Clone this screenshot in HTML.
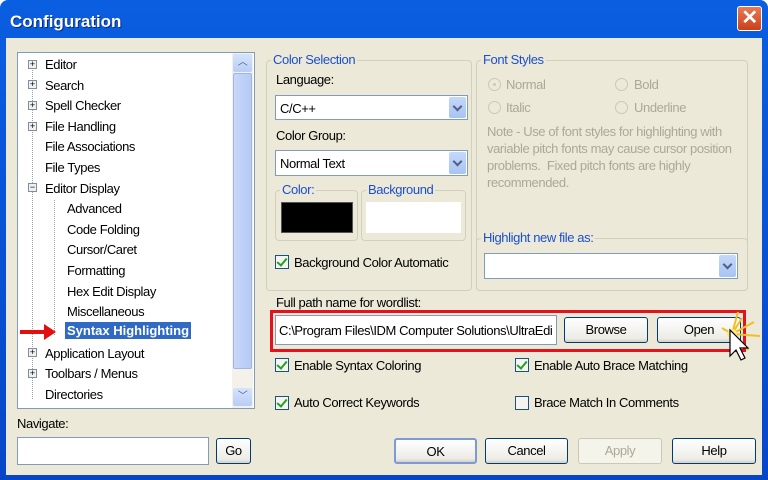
<!DOCTYPE html>
<html><head><meta charset="utf-8"><style>
*{box-sizing:border-box;margin:0;padding:0}
body{width:768px;height:480px;overflow:hidden;background:#fff;font-family:"Liberation Sans",sans-serif;font-size:13px;letter-spacing:-0.4px;color:#000;position:relative}
.a{position:absolute;white-space:nowrap}
.win{position:absolute;left:0;top:0;width:768px;height:480px;background:linear-gradient(#0a5ee0,#0846c8);border-radius:8px 8px 0 0}
.body{position:absolute;left:6px;top:38px;width:756px;height:437px;background:#ece9d8}
.title{left:10px;top:12px;color:#fff;font-weight:bold;font-size:17px;letter-spacing:0;text-shadow:1px 1px #0a2a80}
.close{left:737px;top:6px;width:25px;height:25px;background:linear-gradient(#e97a56,#c8401a);border:1px solid #fff;border-radius:3px;color:#fff;font-size:20px;text-align:center;line-height:22px;font-weight:bold}
.box{position:absolute;background:#fff;border:1px solid #7f9db9}
.grp{position:absolute;border:1px solid #d0d0bf;border-radius:4px}
.gl{position:absolute;background:#ece9d8;color:#1a4fd0;padding:0 2px;top:-9px;left:4px}
.combo{position:absolute;background:#fff;border:1px solid #7f9db9}
.dd{position:absolute;right:1px;top:1px;bottom:1px;width:17px;background:linear-gradient(#c5d8fb,#a9c3f2);border-radius:2px}
.dd:after{content:"";position:absolute;left:5px;top:6px;width:5px;height:5px;border-right:2px solid #4d6185;border-bottom:2px solid #4d6185;transform:rotate(45deg)}
.btn{position:absolute;border:1px solid #003c74;border-radius:3px;background:linear-gradient(#fff,#ecebe6 85%,#d6d0c5);text-align:center}
.cb{position:absolute;width:14px;height:14px;border:1px solid #1c5180;background:#f4f4f0}
.cb.on:after{content:"";position:absolute;left:3px;top:0px;width:4px;height:8px;border-right:2px solid #21a121;border-bottom:2px solid #21a121;transform:rotate(40deg)}
.rad{position:absolute;width:13px;height:13px;border:1px solid #cac8bb;border-radius:50%}
.g{color:#aca899}
.pm{position:absolute;width:9px;height:9px;border:1px solid #7a8ea5;background:#f0f0ec;font-size:9px;line-height:7px;text-align:center;letter-spacing:0}
</style></head><body>
<div class="win"></div>
<div class="a title">Configuration</div>
<div class="a close">✕</div>
<div class="body"></div>

<div class="box" style="left:17px;top:52px;width:238px;height:357px"></div>
<div class="a" style="left:232px;top:53px;width:21px;height:355px;background:#f3f1ea"></div>
<div class="a" style="left:233px;top:54px;width:19px;height:18px;background:linear-gradient(#d6e3fc,#b8cdf6);border-radius:2px;color:#4d6185;font-size:10px;text-align:center;line-height:18px">︿</div>
<div class="a" style="left:233px;top:73px;width:19px;height:296px;background:linear-gradient(90deg,#c8d7fa,#b6caf3);border:1px solid #9eb5e6;border-radius:2px"></div>
<div class="a" style="left:233px;top:388px;width:19px;height:18px;background:linear-gradient(#d6e3fc,#b8cdf6);border-radius:2px;color:#4d6185;font-size:10px;text-align:center;line-height:18px">﹀</div>
<div class="a" style="left:32px;top:64px;height:335px;border-left:1px dotted #a0a0a0"></div>
<div class="a" style="left:54px;top:200px;height:135px;border-left:1px dotted #a0a0a0"></div>
<div class="pm" style="left:28px;top:60px">+</div>
<div class="pm" style="left:28px;top:80px">+</div>
<div class="pm" style="left:28px;top:101px">+</div>
<div class="pm" style="left:28px;top:122px">+</div>
<div class="pm" style="left:28px;top:183px">−</div>
<div class="pm" style="left:28px;top:348px">+</div>
<div class="pm" style="left:28px;top:369px">+</div>
<div class="a" style="left:45px;top:57px">Editor</div>
<div class="a" style="left:45px;top:78px">Search</div>
<div class="a" style="left:45px;top:98px">Spell Checker</div>
<div class="a" style="left:45px;top:119px">File Handling</div>
<div class="a" style="left:45px;top:139px">File Associations</div>
<div class="a" style="left:45px;top:160px">File Types</div>
<div class="a" style="left:45px;top:181px">Editor Display</div>
<div class="a" style="left:67px;top:201px">Advanced</div>
<div class="a" style="left:67px;top:222px">Code Folding</div>
<div class="a" style="left:67px;top:242px">Cursor/Caret</div>
<div class="a" style="left:67px;top:263px">Formatting</div>
<div class="a" style="left:67px;top:284px">Hex Edit Display</div>
<div class="a" style="left:67px;top:304px">Miscellaneous</div>
<div class="a" style="left:65px;top:322px;background:#316ac5;color:#fff;font-weight:bold;padding:1px 2px;letter-spacing:0">Syntax Highlighting</div>
<div class="a" style="left:45px;top:346px">Application Layout</div>
<div class="a" style="left:45px;top:366px">Toolbars / Menus</div>
<div class="a" style="left:45px;top:387px">Directories</div>
<svg class="a" style="left:18px;top:322px" width="42" height="20"><path d="M2 8h24v-6l12 8-12 8v-6H2z" fill="#e01010"/></svg>

<div class="a" style="left:17px;top:416px">Navigate:</div>
<div class="box" style="left:17px;top:437px;width:192px;height:28px"></div>
<div class="btn" style="left:216px;top:438px;width:35px;height:26px;line-height:24px">Go</div>

<div class="grp" style="left:266px;top:60px;width:206px;height:231px"><span class="gl">Color Selection</span></div>
<div class="a" style="left:276px;top:72px">Language:</div>
<div class="combo" style="left:275px;top:95px;width:193px;height:25px"><span class="a" style="left:4px;top:5px">C/C++</span><div class="dd"></div></div>
<div class="a" style="left:276px;top:128px">Color Group:</div>
<div class="combo" style="left:275px;top:150px;width:193px;height:26px"><span class="a" style="left:4px;top:5px">Normal Text</span><div class="dd"></div></div>
<div class="grp" style="left:275px;top:190px;width:83px;height:51px"><span class="gl">Color:</span></div>
<div class="a" style="left:281px;top:202px;width:72px;height:31px;background:#000;border:1px solid #555"></div>
<div class="grp" style="left:361px;top:190px;width:105px;height:51px"><span class="gl">Background</span></div>
<div class="a" style="left:366px;top:202px;width:95px;height:31px;background:#fff"></div>
<div class="cb on" style="left:275px;top:255px"></div>
<div class="a" style="left:294px;top:255px">Background Color Automatic</div>

<div class="grp" style="left:476px;top:60px;width:272px;height:231px"><span class="gl">Font Styles</span></div>
<div class="rad" style="left:488px;top:78px"><div style="position:absolute;left:4px;top:4px;width:3px;height:3px;background:#cac8bb;border-radius:50%"></div></div>
<div class="a g" style="left:506px;top:77px">Normal</div>
<div class="rad" style="left:615px;top:78px"></div>
<div class="a g" style="left:634px;top:77px">Bold</div>
<div class="rad" style="left:488px;top:101px"></div>
<div class="a g" style="left:506px;top:100px">Italic</div>
<div class="rad" style="left:615px;top:101px"></div>
<div class="a g" style="left:634px;top:100px">Underline</div>
<div class="a g" style="left:487px;top:123px;line-height:17px;white-space:normal;width:260px">Note - Use of font styles for highlighting with variable pitch fonts may cause cursor position problems.&nbsp; Fixed pitch fonts are highly recommended.</div>
<div class="grp" style="left:476px;top:238px;width:272px;height:53px;border-radius:4px"><span class="gl" style="color:#1a4fd0">Highlight new file as:</span></div>
<div class="combo" style="left:484px;top:253px;width:254px;height:26px"><div class="dd"></div></div>

<div class="a" style="left:276px;top:295px">Full path name for wordlist:</div>
<div class="a" style="left:270px;top:310px;width:476px;height:42px;border:3px solid #e5121e"></div>
<div class="box" style="left:275px;top:315px;width:282px;height:30px;overflow:hidden"><span class="a" style="left:3px;top:7px">C:\Program Files\IDM Computer Solutions\UltraEdi</span></div>
<div class="btn" style="left:564px;top:317px;width:84px;height:26px;line-height:24px">Browse</div>
<div class="btn" style="left:657px;top:317px;width:84px;height:26px;line-height:24px">Open</div>
<svg class="a" style="left:718px;top:308px" width="46" height="60">
<g stroke="#f0c020" stroke-width="2"><path d="M14 26L4 20M14 26L24 10M14 26L36 14M14 26L42 28M14 26L30 42M14 26L20 4"/></g>
<circle cx="14" cy="26" r="5" fill="#ffe680"/>
<path d="M12 22v26l6-6 5 10 4-2-5-10h8z" fill="#fff" stroke="#000" stroke-width="1.2"/>
</svg>

<div class="cb on" style="left:275px;top:358px"></div>
<div class="a" style="left:294px;top:358px">Enable Syntax Coloring</div>
<div class="cb on" style="left:275px;top:396px"></div>
<div class="a" style="left:294px;top:395px">Auto Correct Keywords</div>
<div class="cb on" style="left:515px;top:358px"></div>
<div class="a" style="left:534px;top:358px">Enable Auto Brace Matching</div>
<div class="cb" style="left:515px;top:396px"></div>
<div class="a" style="left:534px;top:395px">Brace Match In Comments</div>

<div class="btn" style="left:394px;top:438px;width:83px;height:26px;line-height:24px;border:2px solid #7d9ad8">OK</div>
<div class="btn" style="left:485px;top:438px;width:83px;height:26px;line-height:24px">Cancel</div>
<div class="btn g" style="left:578px;top:438px;width:84px;height:26px;line-height:24px;border-color:#cac8bb;background:#f5f4ea">Apply</div>
<div class="btn" style="left:672px;top:438px;width:84px;height:26px;line-height:24px">Help</div>
</body></html>
